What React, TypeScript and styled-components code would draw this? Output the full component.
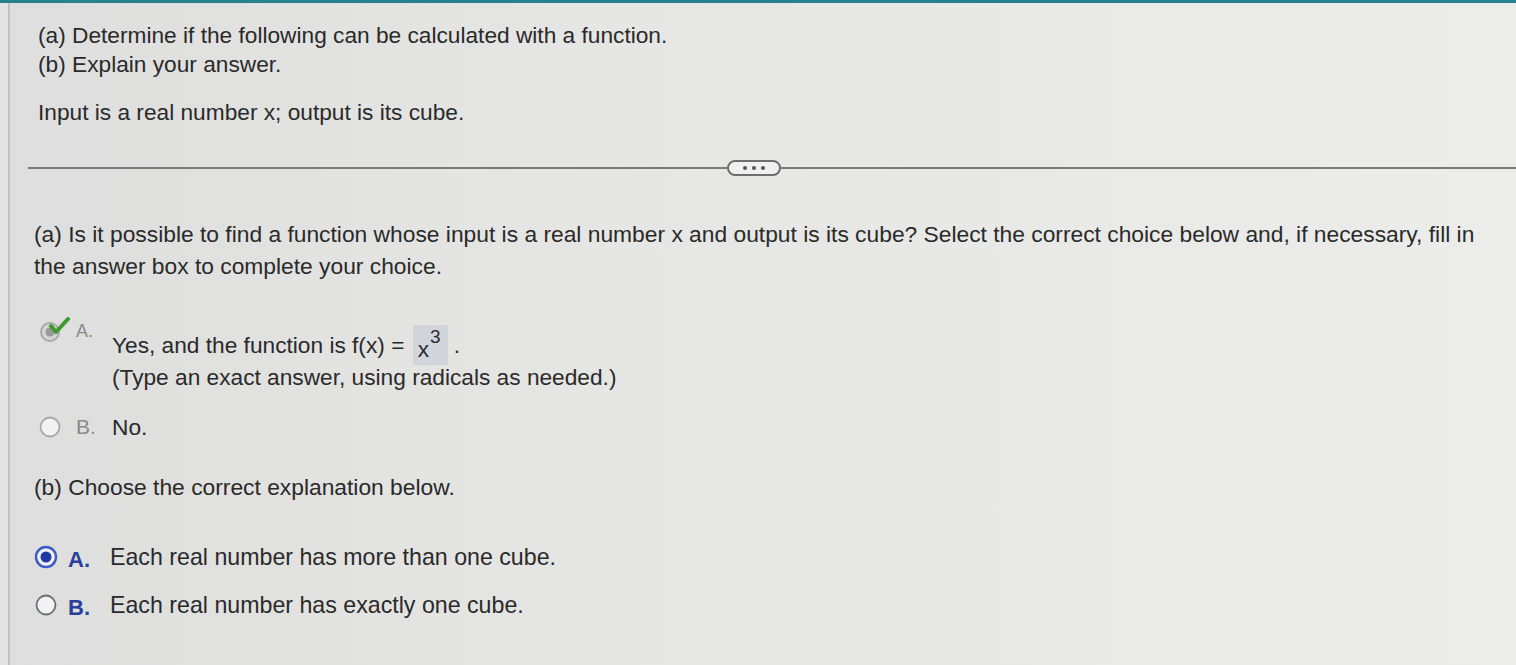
import styled, { createGlobalStyle } from 'styled-components';

const GlobalStyle = createGlobalStyle`
  html, body {
    margin: 0;
    padding: 0;
    background: #e4e4e2;
  }
  body {
    font-family: "Liberation Sans", Arial, sans-serif;
    color: #2a2a2a;
  }
`;

function CheckedRadio() {
  return (
    <svg width="34" height="26" viewBox="0 0 34 26">
      <circle cx="12" cy="15" r="9" fill="#d4d4d4" stroke="#a9a9a9" strokeWidth="2" />
      <circle cx="12" cy="15" r="4.5" fill="#9a9a9a" />
      <path d="M13 9 L18 15 L30 2" fill="none" stroke="#3f9a2c" strokeWidth="4" strokeLinecap="round" strokeLinejoin="round" />
    </svg>
  );
}

function Radio({ selected, muted }: { selected?: boolean; muted?: boolean }) {
  const ring = muted ? '#a8a8a8' : '#6c6f78';
  return (
    <svg width="24" height="24" viewBox="0 0 24 24">
      {selected ? (
        <>
          <circle cx="12" cy="12" r="10" fill="#eef0f6" stroke="#3a5bc4" strokeWidth="2.4" />
          <circle cx="12" cy="12" r="5.5" fill="#1f3aa8" />
        </>
      ) : (
        <circle cx="12" cy="12" r="9.5" fill="#f2f2f2" stroke={ring} strokeWidth="1.8" />
      )}
    </svg>
  );
}

export default function App() {
  return (
    <>
      <GlobalStyle />
      <TopBar />
      <Frame>
        <Question>
          <Line>(a) Determine if the following can be calculated with a function.</Line>
          <Line>(b) Explain your answer.</Line>
          <Line $gap={19}>Input is a real number x; output is its cube.</Line>
        </Question>

        <Divider>
          <Rule $grow={699} />
          <Pill>
            <Dot />
            <Dot />
            <Dot />
          </Pill>
          <Rule $grow={735} />
        </Divider>

        <Part>
          <Prompt>
            (a) Is it possible to find a function whose input is a real number x and output is its cube? Select the correct choice below and, if necessary, fill in the answer box to complete your choice.
          </Prompt>

          <Choices>
            <ChoiceA>
              <Marker>
                <CheckedRadio />
                <SmallLetter>A.</SmallLetter>
              </Marker>
              <ChoiceBody>
                <AnswerLine>
                  Yes, and the function is f(x) ={' '}
                  <AnswerBox>
                    x<Sup>3</Sup>
                  </AnswerBox>
                  <span>.</span>
                </AnswerLine>
                <Hint>(Type an exact answer, using radicals as needed.)</Hint>
              </ChoiceBody>
            </ChoiceA>

            <Choice>
              <Marker>
                <Radio muted />
                <SmallLetter $plain>B.</SmallLetter>
              </Marker>
              <ChoiceText>No.</ChoiceText>
            </Choice>
          </Choices>
        </Part>

        <Part $top={30}>
          <Prompt>(b) Choose the correct explanation below.</Prompt>
          <Explanations>
            <Choice>
              <Marker $wide>
                <Radio selected />
                <BlueLetter>A.</BlueLetter>
              </Marker>
              <ChoiceText $big>Each real number has more than one cube.</ChoiceText>
            </Choice>
            <Choice>
              <Marker $wide>
                <Radio />
                <BlueLetter>B.</BlueLetter>
              </Marker>
              <ChoiceText $big>Each real number has exactly one cube.</ChoiceText>
            </Choice>
          </Explanations>
        </Part>
      </Frame>
    </>
  );
}

const TopBar = styled.div`
  height: 3px;
  background: #27808c;
`;

const Frame = styled.div`
  margin-left: 8px;
  border-left: 2px solid #c2c2c2;
  min-height: 662px;
  background: linear-gradient(90deg, #dedede 0%, #e6e6e4 40%, #ececea 100%);
`;

const Question = styled.div`
  padding: 18px 0 0 28px;
`;

const Line = styled.div<{ $gap?: number }>`
  font-size: 22.7px;
  line-height: 29px;
  margin-top: ${(p) => p.$gap ?? 0}px;
`;

const Divider = styled.div`
  display: flex;
  align-items: center;
  margin: 33px 0 0 18px;
  height: 16px;
`;

const Rule = styled.div<{ $grow: number }>`
  flex: ${(p) => p.$grow} 1 0;
  height: 2px;
  background: #7a7a7a;
`;

const Pill = styled.div`
  width: 50px;
  height: 12px;
  border: 2px solid #6e6e6e;
  border-radius: 8px;
  background: #f1f1f1;
  display: flex;
  align-items: center;
  justify-content: center;
  gap: 5px;
`;

const Dot = styled.span`
  width: 4px;
  height: 4px;
  border-radius: 50%;
  background: #555;
`;

const Part = styled.div<{ $top?: number }>`
  padding-left: 24px;
  margin-top: ${(p) => p.$top ?? 42}px;
`;

const Prompt = styled.div`
  font-size: 22.8px;
  line-height: 32px;
  padding-right: 12px;
`;

const Choices = styled.div`
  margin-top: 35px;
  padding-left: 4px;
  display: flex;
  flex-direction: column;
  gap: 24px;
`;

const Choice = styled.div`
  display: flex;
  align-items: center;
`;

const ChoiceA = styled.div`
  display: flex;
  align-items: flex-start;
`;

const Marker = styled.div<{ $wide?: boolean }>`
  width: ${(p) => (p.$wide ? 76 : 74)}px;
  display: flex;
  align-items: center;
  gap: ${(p) => (p.$wide ? 10 : 4)}px;
`;

const SmallLetter = styled.span<{ $plain?: boolean }>`
  font-size: ${(p) => (p.$plain ? 21 : 18)}px;
  color: #8a8a8a;
  margin-left: ${(p) => (p.$plain ? 10 : 0)}px;
  margin-top: ${(p) => (p.$plain ? 0 : 2)}px;
`;

const ChoiceBody = styled.div`
  padding-top: 8px;
  display: flex;
  flex-direction: column;
`;

const AnswerLine = styled.div`
  font-size: 22.7px;
  line-height: 40px;
  display: flex;
  align-items: flex-end;
  white-space: pre;
`;

const AnswerBox = styled.span`
  display: inline-flex;
  align-items: flex-end;
  background: #d2d5db;
  height: 40px;
  padding: 0 7px 0 5px;
  margin: 0 6px 0 2px;
  line-height: 32px;
`;

const Sup = styled.span`
  font-size: 19px;
  align-self: flex-start;
  line-height: 24px;
  margin-left: 1px;
`;

const Hint = styled.div`
  font-size: 22.7px;
  line-height: 24px;
`;

const ChoiceText = styled.span<{ $big?: boolean }>`
  font-size: ${(p) => (p.$big ? 23.2 : 22.7)}px;
  line-height: 28px;
`;

const BlueLetter = styled.span`
  font-size: 22px;
  font-weight: 700;
  color: #283f9c;
  margin-top: 6px;
`;

const Explanations = styled.div`
  margin-top: 38px;
  display: flex;
  flex-direction: column;
  gap: 16px;
`;
